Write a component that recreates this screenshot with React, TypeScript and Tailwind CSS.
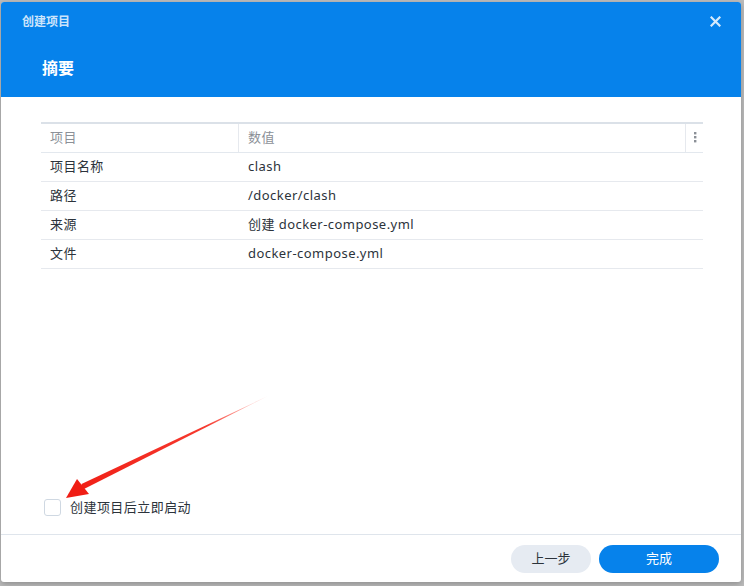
const font = { fontFamily: '"Noto Sans", "Noto Sans CJK SC", sans-serif' };

const rows = [
  ["项目名称", "clash"],
  ["路径", "/docker/clash"],
  ["来源", "创建 docker-compose.yml"],
  ["文件", "docker-compose.yml"],
];

function MoreIcon() {
  return (
    <svg width="4" height="12" viewBox="0 0 4 12" className="text-[#8b9097]">
      <rect x="1" y="0" width="2.4" height="2.4" fill="currentColor" />
      <rect x="1" y="4" width="2.4" height="2.4" fill="currentColor" />
      <rect x="1" y="8" width="2.4" height="2.4" fill="currentColor" />
    </svg>
  );
}

function Arrow() {
  return (
    <svg
      className="absolute left-0 top-0 pointer-events-none"
      width="744"
      height="586"
      viewBox="0 0 744 586"
    >
      <defs>
        <linearGradient id="fade" x1="268" y1="396" x2="66" y2="497" gradientUnits="userSpaceOnUse">
          <stop offset="0" stopColor="#ff2a1a" stopOpacity="0.1" />
          <stop offset="0.3" stopColor="#f52418" stopOpacity="0.9" />
          <stop offset="1" stopColor="#f01d14" />
        </linearGradient>
      </defs>
      <path d="M268,396 L83,489.5 L81.5,484 Z" fill="url(#fade)" />
      <polygon points="66,498 77,479 89,494" fill="#f01d14" />
    </svg>
  );
}

export default function App() {
  return (
    <div className="relative w-[744px] h-[586px] bg-[#bcbcbc] pt-[2px] pl-[1px] overflow-hidden" style={font}>
      <div className="w-[740px] h-[580px] bg-white rounded-[3px] flex flex-col overflow-hidden shadow-[0_2px_6px_rgba(0,0,0,0.25)]">
        <div className="h-[95px] bg-[#0682eb] flex flex-col">
          <div className="h-[39px] flex items-center justify-between pl-[21px] pr-[20px]">
            <span className="text-[12px] font-bold text-[#cde5fb]">创建项目</span>
            <svg width="11" height="11" viewBox="0 0 11 11">
              <path d="M1.5 1.5 L9.5 9.5 M9.5 1.5 L1.5 9.5" stroke="#d6eafc" strokeWidth="2.2" strokeLinecap="square" />
            </svg>
          </div>
          <div className="pl-[41px] pt-[19px] text-[16px] font-bold text-white leading-none">摘要</div>
        </div>

        <div className="flex-1 flex flex-col px-[40px] pt-[25px] tracking-[0.45px]">
          <div className="w-[662px] border-t-2 border-[#dbe1e8] text-[13px]">
            <div className="h-[29px] flex border-b border-[#e3e8ee] text-[#8b9097]">
              <div className="w-[198px] pl-[9px] flex items-center border-r border-[#e6e9ee]">项目</div>
              <div className="flex-1 pl-[9px] flex items-center border-r border-[#e6e9ee]">数值</div>
              <div className="w-[17px] flex items-center justify-center">
                <MoreIcon />
              </div>
            </div>
            {rows.map(([k, v]) => (
              <div key={k} className="h-[29px] flex items-center border-b border-[#e6e9ee] text-[#2c333b]">
                <div className="w-[198px] pl-[9px]">{k}</div>
                <div className="flex-1 pl-[9px]">{v}</div>
              </div>
            ))}
          </div>

          <div className="flex-1" />
          <label className="flex items-center gap-[9px] pl-[3px] mb-[17px] text-[13px] text-[#2c333b]">
            <span className="w-[17px] h-[17px] rounded-[3px] border border-[#cfd8e2] bg-white" />
            创建项目后立即启动
          </label>
        </div>

        <div className="h-[48px] border-t border-[#dfe5ec] flex items-center justify-end gap-[8px] pr-[22px]">
          <button className="w-[80px] h-[28px] rounded-full bg-[#e6ebf2] text-[13px] text-[#2c333b]">上一步</button>
          <button className="w-[120px] h-[28px] rounded-full bg-[#0682eb] text-[13px] text-white">完成</button>
        </div>
      </div>
      <Arrow />
    </div>
  );
}
